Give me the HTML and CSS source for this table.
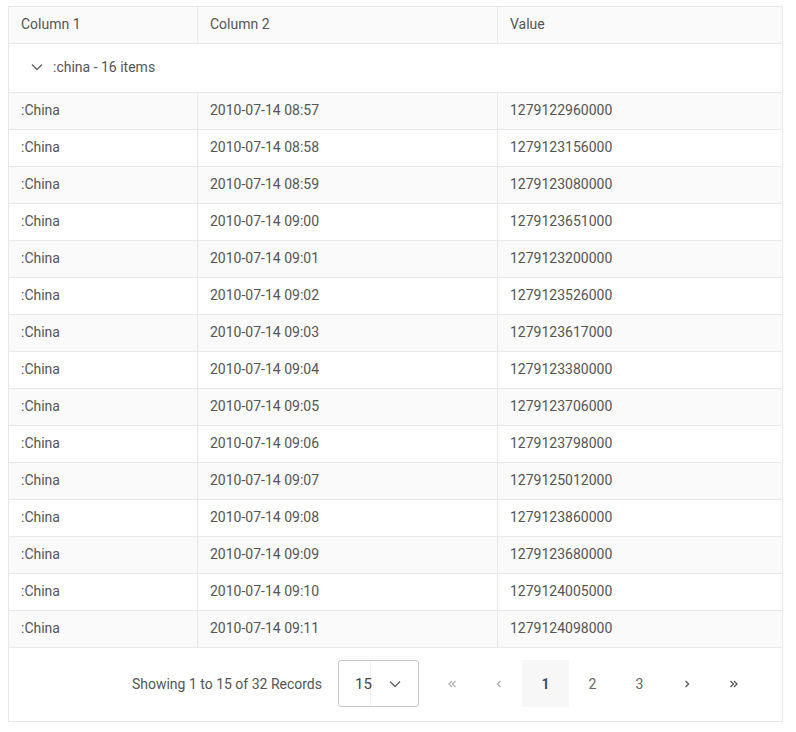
FILE: index.html
```html
<!DOCTYPE html>
<html>
<head>
<meta charset="utf-8">
<link rel="stylesheet" href="styles.css">
</head>
<body>
<div class="grid">
  <div class="row head">
    <div class="cell">Column 1</div>
    <div class="cell">Column 2</div>
    <div class="cell">Value</div>
  </div>
  <div class="group">
    <svg class="caret" width="14" height="14" viewBox="0 0 14 14"><path d="M2 4.5 L7 9.5 L12 4.5" fill="none" stroke="#666" stroke-width="1.4"/></svg>
    <span>:china - 16 items</span>
  </div>
  <div class="row odd"><div class="cell">:China</div><div class="cell">2010-07-14 08:57</div><div class="cell">1279122960000</div></div>
  <div class="row"><div class="cell">:China</div><div class="cell">2010-07-14 08:58</div><div class="cell">1279123156000</div></div>
  <div class="row odd"><div class="cell">:China</div><div class="cell">2010-07-14 08:59</div><div class="cell">1279123080000</div></div>
  <div class="row"><div class="cell">:China</div><div class="cell">2010-07-14 09:00</div><div class="cell">1279123651000</div></div>
  <div class="row odd"><div class="cell">:China</div><div class="cell">2010-07-14 09:01</div><div class="cell">1279123200000</div></div>
  <div class="row"><div class="cell">:China</div><div class="cell">2010-07-14 09:02</div><div class="cell">1279123526000</div></div>
  <div class="row odd"><div class="cell">:China</div><div class="cell">2010-07-14 09:03</div><div class="cell">1279123617000</div></div>
  <div class="row"><div class="cell">:China</div><div class="cell">2010-07-14 09:04</div><div class="cell">1279123380000</div></div>
  <div class="row odd"><div class="cell">:China</div><div class="cell">2010-07-14 09:05</div><div class="cell">1279123706000</div></div>
  <div class="row"><div class="cell">:China</div><div class="cell">2010-07-14 09:06</div><div class="cell">1279123798000</div></div>
  <div class="row odd"><div class="cell">:China</div><div class="cell">2010-07-14 09:07</div><div class="cell">1279125012000</div></div>
  <div class="row"><div class="cell">:China</div><div class="cell">2010-07-14 09:08</div><div class="cell">1279123860000</div></div>
  <div class="row odd"><div class="cell">:China</div><div class="cell">2010-07-14 09:09</div><div class="cell">1279123680000</div></div>
  <div class="row"><div class="cell">:China</div><div class="cell">2010-07-14 09:10</div><div class="cell">1279124005000</div></div>
  <div class="row odd"><div class="cell">:China</div><div class="cell">2010-07-14 09:11</div><div class="cell">1279124098000</div></div>
  <div class="footer">
    <span class="info">Showing 1 to 15 of 32 Records</span>
    <div class="select">
      <span class="sel-val">15</span>
      <span class="sel-btn"><svg width="14" height="14" viewBox="0 0 14 14"><path d="M2 4.5 L7 9.5 L12 4.5" fill="none" stroke="#666" stroke-width="1.4"/></svg></span>
    </div>
    <div class="pager">
      <span class="pg dis"><svg width="12" height="12" viewBox="0 0 12 12"><path d="M6 3 L3 6 L6 9 M9.5 3 L6.5 6 L9.5 9" fill="none" stroke="#aaa" stroke-width="1.1"/></svg></span>
      <span class="pg dis"><svg width="12" height="12" viewBox="0 0 12 12"><path d="M7.5 3 L4.5 6 L7.5 9" fill="none" stroke="#aaa" stroke-width="1.1"/></svg></span>
      <span class="pg cur">1</span>
      <span class="pg">2</span>
      <span class="pg">3</span>
      <span class="pg"><svg width="12" height="12" viewBox="0 0 12 12"><path d="M4.5 3 L7.5 6 L4.5 9" fill="none" stroke="#555" stroke-width="1.3"/></svg></span>
      <span class="pg"><svg width="12" height="12" viewBox="0 0 12 12"><path d="M2.5 3 L5.5 6 L2.5 9 M6 3 L9 6 L6 9" fill="none" stroke="#555" stroke-width="1.3"/></svg></span>
    </div>
  </div>
</div>
</body>
</html>
```

FILE: styles.css
```css
body {
  margin: 6px 0 0 8px;
  font-family: Roboto, "Liberation Sans", sans-serif;
  font-size: 14px;
  color: #555;
  background: #fff;
}
.grid {
  width: 773px;
  border: 1px solid #e8e8e8;
}
.row {
  display: grid;
  grid-template-columns: 188px 300px 1fr;
  height: 36px;
  border-bottom: 1px solid #e8e8e8;
}
.row.head, .row.odd {
  background: #fafafa;
}
.cell {
  display: flex;
  align-items: center;
  padding-left: 12px;
  padding-bottom: 2px;
  border-left: 1px solid #e8e8e8;
}
.cell:first-child {
  border-left: none;
}
.group {
  display: flex;
  align-items: center;
  height: 49px;
  box-sizing: border-box;
  padding-bottom: 2px;
  border-bottom: 1px solid #e8e8e8;
  padding-left: 21px;
  gap: 9px;
}
.caret {
  display: block;
}
.footer {
  height: 73px;
  box-sizing: border-box;
  padding-bottom: 2px;
  display: flex;
  align-items: center;
  justify-content: flex-end;
  padding-right: 25px;
}
.info {
  margin-right: 16px;
}
.select {
  width: 79px;
  height: 45px;
  border: 1px solid #c8c8c8;
  border-radius: 3px;
  display: flex;
  align-items: center;
  margin-right: 9px;
  color: #444;
  font-size: 15px;
}
.sel-val {
  width: 32px;
  padding-left: 16px;
  height: 100%;
  display: flex;
  align-items: center;
  border-right: 1px solid #f2f2f2;
  box-sizing: border-box;
}
.sel-btn {
  flex: 1;
  display: flex;
  justify-content: center;
  align-items: center;
}
.sel-btn svg { display: block; }
.pager {
  display: flex;
}
.pg {
  width: 47px;
  height: 47px;
  display: flex;
  align-items: center;
  justify-content: center;
  color: #666;
}
.pg svg { display: block; }
.pg.cur {
  background: #f7f7f7;
  color: #3f4a6b;
  font-weight: 700;
}
```
